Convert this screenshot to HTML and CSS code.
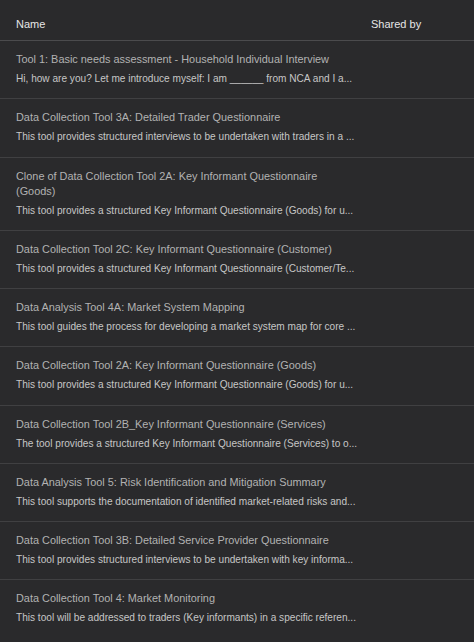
FILE: index.html
```html
<!DOCTYPE html>
<html lang="en">
<head>
<meta charset="utf-8">
<title>Shared tools</title>
<link rel="stylesheet" href="styles.css">
</head>
<body>
<div class="table">
  <div class="head">
    <div class="hcell name-col">Name</div>
    <div class="hcell">Shared by</div>
  </div>
  <div class="row">
    <div class="cell name-col">
      <div class="title">Tool 1: Basic needs assessment - Household Individual Interview</div>
      <div class="desc">Hi, how are you? Let me introduce myself: I am ______ from NCA and I a...</div>
    </div>
    <div class="cell"></div>
  </div>
  <div class="row">
    <div class="cell name-col">
      <div class="title">Data Collection Tool 3A: Detailed Trader Questionnaire</div>
      <div class="desc">This tool provides structured interviews to be undertaken with traders in a ...</div>
    </div>
    <div class="cell"></div>
  </div>
  <div class="row">
    <div class="cell name-col">
      <div class="title">Clone of Data Collection Tool 2A: Key Informant Questionnaire (Goods)</div>
      <div class="desc">This tool provides a structured Key Informant Questionnaire (Goods) for u...</div>
    </div>
    <div class="cell"></div>
  </div>
  <div class="row">
    <div class="cell name-col">
      <div class="title">Data Collection Tool 2C: Key Informant Questionnaire (Customer)</div>
      <div class="desc">This tool provides a structured Key Informant Questionnaire (Customer/Te...</div>
    </div>
    <div class="cell"></div>
  </div>
  <div class="row">
    <div class="cell name-col">
      <div class="title">Data Analysis Tool 4A: Market System Mapping</div>
      <div class="desc">This tool guides the process for developing a market system map for core ...</div>
    </div>
    <div class="cell"></div>
  </div>
  <div class="row">
    <div class="cell name-col">
      <div class="title">Data Collection Tool 2A: Key Informant Questionnaire (Goods)</div>
      <div class="desc">This tool provides a structured Key Informant Questionnaire (Goods) for u...</div>
    </div>
    <div class="cell"></div>
  </div>
  <div class="row">
    <div class="cell name-col">
      <div class="title">Data Collection Tool 2B_Key Informant Questionnaire (Services)</div>
      <div class="desc">The tool provides a structured Key Informant Questionnaire (Services) to o...</div>
    </div>
    <div class="cell"></div>
  </div>
  <div class="row">
    <div class="cell name-col">
      <div class="title">Data Analysis Tool 5: Risk Identification and Mitigation Summary</div>
      <div class="desc">This tool supports the documentation of identified market-related risks and...</div>
    </div>
    <div class="cell"></div>
  </div>
  <div class="row">
    <div class="cell name-col">
      <div class="title">Data Collection Tool 3B: Detailed Service Provider Questionnaire</div>
      <div class="desc">This tool provides structured interviews to be undertaken with key informa...</div>
    </div>
    <div class="cell"></div>
  </div>
  <div class="row">
    <div class="cell name-col">
      <div class="title">Data Collection Tool 4: Market Monitoring</div>
      <div class="desc">This tool will be addressed to traders (Key informants) in a specific referen...</div>
    </div>
    <div class="cell"></div>
  </div>
</div>
</body>
</html>
```
FILE: styles.css
```css
html, body {
  margin: 0;
  padding: 0;
  background: #2a2a2c;
}
body {
  font-family: "Liberation Sans", Arial, sans-serif;
  color: #b4b4b4;
  min-height: 642px;
}
.table {
  display: flex;
  flex-direction: column;
}
.head {
  display: grid;
  grid-template-columns: 371px 1fr;
  height: 41px;
  box-sizing: border-box;
  padding-top: 17px;
  border-bottom: 1px solid #4b4b4d;
}
.hcell {
  font-size: 11px;
  line-height: 15px;
  color: #e6e6e6;
}
.head .name-col {
  padding-left: 16px;
}
.row {
  display: grid;
  grid-template-columns: 371px 1fr;
  border-bottom: 1px solid #404042;
}
.row:last-child {
  border-bottom: none;
}
.cell.name-col {
  padding: 11px 16px 12.25px 16px;
}
.title {
  font-size: 10.9px;
  line-height: 15px;
  color: #b2b2b2;
}
.desc {
  margin-top: 5px;
  font-size: 10.1px;
  line-height: 14px;
  color: #c6c6c6;
  white-space: nowrap;
}
```
